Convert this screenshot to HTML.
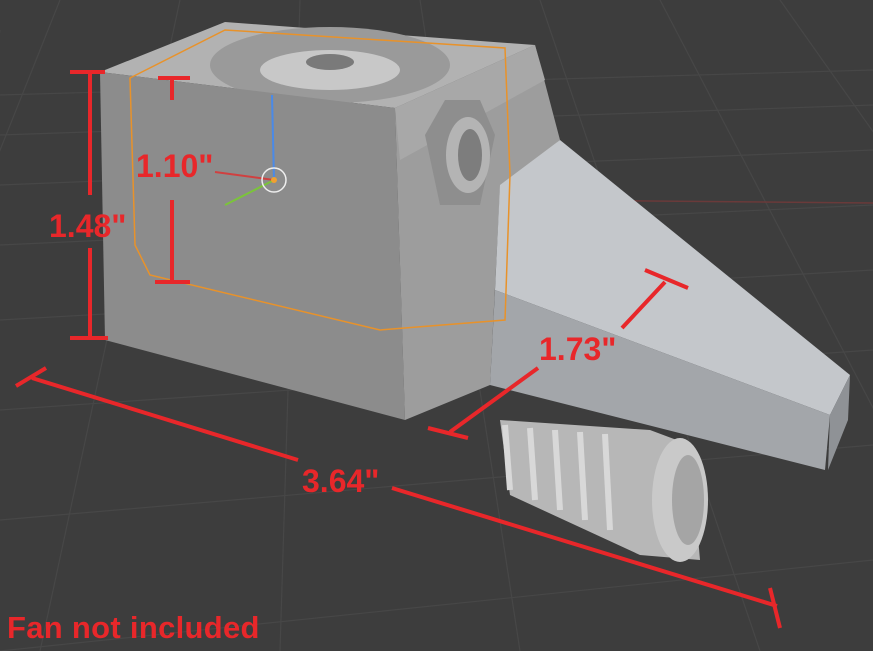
<!DOCTYPE html>
<html><head><meta charset="utf-8"><style>
html,body{margin:0;padding:0;background:#3c3c3c;overflow:hidden}
svg{display:block}
text{font-family:"Liberation Sans",sans-serif;font-weight:bold;fill:#e8272a}
</style></head><body>
<svg width="873" height="651" viewBox="0 0 873 651" xmlns="http://www.w3.org/2000/svg">
<rect width="873" height="651" fill="#3d3d3d"/>
<g stroke="#474747" stroke-width="1.2" fill="none">
<path d="M0 95 L873 70 M0 135 L873 105 M0 185 L873 150 M0 245 L873 205 M0 320 L873 270 M0 410 L873 350 M0 520 L873 445 M0 651 L873 560"/>
<path d="M60 0 L-200 651 M180 0 L40 651 M300 0 L280 651 M420 0 L520 651 M540 0 L760 651 M660 0 L1000 651 M780 0 L1240 651 M0 30 L-100 651"/>
</g>
<path d="M545 200 L873 203" stroke="#6a3a3a" stroke-width="1.5"/>
<polygon points="100,72 225,22 535,45 395,108" fill="#b2b2b2"/>
<ellipse cx="330" cy="65" rx="120" ry="38" fill="#9a9a9a"/>
<ellipse cx="330" cy="70" rx="70" ry="20" fill="#c8c8c8"/>
<ellipse cx="330" cy="62" rx="24" ry="8" fill="#7a7a7a"/>
<polygon points="100,72 395,108 405,420 105,340" fill="#8c8c8c"/>
<polygon points="395,108 535,45 560,140 500,190 490,385 405,420" fill="#9d9d9d"/>
<polygon points="395,108 535,45 545,80 400,160" fill="#a8a8a8"/>
<polygon points="425,135 445,100 480,100 495,135 480,205 440,205" fill="#8e8e8e"/>
<ellipse cx="468" cy="155" rx="22" ry="38" fill="#b4b4b4"/>
<ellipse cx="470" cy="155" rx="12" ry="26" fill="#7d7d7d"/>
<polygon points="500,185 560,140 850,375 830,415 495,290" fill="#c4c7cb"/>
<polygon points="495,290 830,415 825,470 490,385" fill="#a3a6aa"/>
<polygon points="830,415 850,375 848,420 828,470" fill="#8f9296"/>
<path d="M130 78 L225 30 L505 48 L510 175 L505 320 L380 330 L150 275 L135 245 Z" fill="none" stroke="#e8922a" stroke-width="1.5"/>
<line x1="274" y1="180" x2="272" y2="95" stroke="#4a8ae8" stroke-width="2"/>
<line x1="274" y1="180" x2="225" y2="205" stroke="#7bc43a" stroke-width="2"/>
<line x1="274" y1="180" x2="215" y2="172" stroke="#d04040" stroke-width="2"/>
<circle cx="274" cy="180" r="12" fill="none" stroke="#eee" stroke-width="1.5"/>
<circle cx="274" cy="180" r="3" fill="#f0a030"/>
<polygon points="500,420 650,430 690,445 700,560 640,555 510,495" fill="#b7b7b7"/>
<g stroke="#d8d8d8" stroke-width="6">
<line x1="505" y1="425" x2="510" y2="490"/><line x1="530" y1="428" x2="535" y2="500"/><line x1="555" y1="430" x2="560" y2="510"/><line x1="580" y1="432" x2="585" y2="520"/><line x1="605" y1="434" x2="610" y2="530"/>
</g>
<ellipse cx="680" cy="500" rx="28" ry="62" fill="#c9c9c9"/>
<ellipse cx="688" cy="500" rx="16" ry="45" fill="#a5a5a5"/>
<g stroke="#e8272a" stroke-width="4" fill="none">
<path d="M90 72 L90 195 M90 248 L90 338 M70 72 L105 72 M70 338 L108 338"/>
<path d="M172 78 L172 100 M172 200 L172 282 M158 78 L190 78 M155 282 L190 282"/>
<path d="M32 378 L298 460 M392 488 L777 606 M16 386 L46 368 M770 588 L780 628"/>
<path d="M450 432 L538 368 M622 328 L665 282 M428 428 L468 438 M645 270 L688 288"/>
</g>
<text x="49" y="237" font-size="32">1.48"</text>
<text x="136" y="177" font-size="32">1.10"</text>
<text x="539" y="360" font-size="32">1.73"</text>
<text x="302" y="492" font-size="32">3.64"</text>
<text x="7" y="638" font-size="31" letter-spacing="0.3">Fan not included</text>
</svg>
</body></html>
